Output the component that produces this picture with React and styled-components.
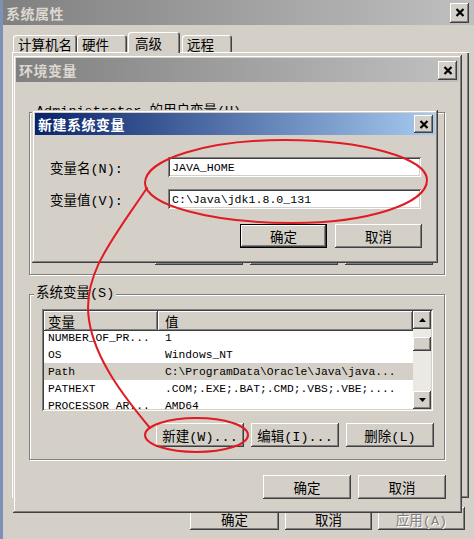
import React from 'react';
import styled, { createGlobalStyle, css } from 'styled-components';

const FACE = '#d4d0c8';

const GlobalStyle = createGlobalStyle`
  html, body { margin: 0; padding: 0; }
  body {
    background: #7d91b6;
    font-family: "Liberation Mono", "Noto Sans CJK SC", monospace;
  }
`;

// classic 3d edges
const raised = css`
  box-shadow: inset -1px -1px #404040, inset 1px 1px #ffffff, inset -2px -2px #808080, inset 2px 2px ${FACE};
`;
const sunken = css`
  box-shadow: inset 1px 1px #808080, inset -1px -1px #ffffff, inset 2px 2px #404040, inset -2px -2px ${FACE};
`;
const frame = css`
  box-shadow: inset -1px -1px #404040, inset 1px 1px ${FACE}, inset -2px -2px #808080, inset 2px 2px #ffffff;
`;

const Desktop = styled.div`
  position: relative;
  width: 474px;
  height: 539px;
  overflow: hidden;
  background: #7d91b6;
`;

const OuterWindow = styled.div`
  position: absolute;
  left: 3px;
  top: 0;
  width: 474px;
  height: 539px;
  background: ${FACE};
  display: flex;
  flex-direction: column;
`;

const Window = styled.div`
  position: absolute;
  left: ${p => p.$x}px;
  top: ${p => p.$y}px;
  width: ${p => p.$w}px;
  height: ${p => p.$h}px;
  box-sizing: border-box;
  padding: 3px;
  background: ${FACE};
  display: flex;
  flex-direction: column;
  ${frame}
`;

const TitleBar = styled.div`
  flex: none;
  height: ${p => p.$h}px;
  display: flex;
  align-items: center;
  padding: 0 ${p => p.$right ?? 2}px 0 3px;
  background: ${p => p.$active
    ? 'linear-gradient(to right, #0a246a, #a6caf0)'
    : 'linear-gradient(to right, #808080, #c0c0c0)'};
  color: ${p => p.$active ? '#ffffff' : '#dcd8d0'};
  font-family: "Noto Sans CJK SC", sans-serif;
  font-weight: bold;
  font-size: 14px;
  letter-spacing: 0.5px;
`;

const TitleText = styled.span`
  flex: 1;
`;

const CloseButton = styled.div`
  width: 19px;
  height: ${p => p.$h || 19}px;
  display: flex;
  align-items: center;
  justify-content: center;
  background: ${FACE};
  ${raised}
`;

const CloseX = () => (
  <svg width="10" height="9" viewBox="0 0 10 9">
    <path d="M1.5 1L8.5 8M8.5 1L1.5 8" stroke="#000" strokeWidth="2.2" />
  </svg>
);

const OuterBody = styled.div`
  flex: 1;
  display: flex;
  flex-direction: column;
  padding: 7px 8px 0 9px;
`;

const TabRow = styled.div`
  display: flex;
  align-items: flex-end;
  height: 21px;
  margin-bottom: -1px;
  padding-left: 1px;
`;

const Tab = styled.div`
  position: relative;
  z-index: ${p => p.$active ? 1 : 0};
  box-sizing: border-box;
  width: ${p => p.$w}px;
  height: ${p => p.$active ? 21 : 17}px;
  margin: ${p => p.$active ? '0 2px 0 1px' : '0 0 1px 0'};
  padding-left: ${p => p.$active ? 7 : 5}px;
  display: flex;
  align-items: center;
  background: ${FACE};
  border-radius: 3px 3px 0 0;
  box-shadow: inset 1px 1px #ffffff, inset -1px 0 #404040, inset -2px 0 #808080;
  font-size: 13.5px;
  color: #000;
`;

const TabPanel = styled.div`
  height: 446px;
  background: ${FACE};
  box-shadow: inset 1px 1px #ffffff, inset -1px -1px #404040, inset -2px -2px #808080;
`;

const ButtonRow = styled.div`
  display: flex;
  justify-content: flex-end;
  gap: ${p => p.$gap}px;
  margin-top: ${p => p.$mt || 0}px;
  margin-right: ${p => p.$mr || 0}px;
`;

const Button = styled.button`
  width: ${p => p.$w || 88}px;
  height: ${p => p.$h || 24}px;
  flex: none;
  padding: 0;
  border: none;
  background: ${FACE};
  font-family: "Liberation Mono", "Noto Sans CJK SC", monospace;
  font-size: 13.5px;
  color: ${p => p.$disabled ? '#808080' : '#000'};
  text-shadow: ${p => p.$disabled ? '1px 1px #ffffff' : 'none'};
  ${p => p.$default
    ? css`box-shadow: inset 0 0 0 1px #000, inset -2px -2px #404040, inset 2px 2px #ffffff, inset -3px -3px #808080;`
    : raised}
`;

const EnvBody = styled.div`
  flex: 1;
  display: flex;
  flex-direction: column;
  padding: 22px 14px 0 13px;
`;

const Group = styled.fieldset`
  margin: ${p => p.$mt || 0}px 0 0 0;
  padding: 0;
  min-width: 0;
  border: 1px solid #808080;
  box-shadow: inset 1px 1px #ffffff, 1px 1px #ffffff;
`;

const GroupLabel = styled.legend`
  margin-left: 4px;
  padding: 0 2px;
  height: 16px;
  line-height: 16px;
  background: ${FACE};
  font-size: 13.5px;
  color: #000;
`;

const GroupInner = styled.div`
  box-sizing: border-box;
  height: ${p => p.$h}px;
  display: flex;
  flex-direction: column;
  justify-content: flex-end;
  padding: ${p => p.$pad};
`;

const ListBox = styled.div`
  flex: none;
  height: 102px;
  box-sizing: border-box;
  padding: 2px;
  display: flex;
  background: #ffffff;
  ${sunken}
`;

const ListContent = styled.div`
  flex: 1;
  overflow: hidden;
`;

const Columns = css`
  display: grid;
  grid-template-columns: 114px 1fr;
`;

const HeaderRow = styled.div`
  ${Columns}
  height: 18px;
`;

const HeaderCell = styled.div`
  display: flex;
  align-items: center;
  padding-left: ${p => p.$pad}px;
  background: ${FACE};
  font-size: 13.5px;
  box-shadow: inset -1px -1px #404040, inset 1px 1px #ffffff, inset -2px -2px #808080;
`;

const Row = styled.div`
  ${Columns}
  height: 17px;
  align-items: center;
  background: ${p => p.$selected ? '#d4d0c8' : 'transparent'};
  font-family: "Liberation Mono", monospace;
  font-size: 11.3px;
  white-space: nowrap;
  color: #000;
`;

const Cell = styled.span`
  padding-left: ${p => p.$pad}px;
  overflow: hidden;
`;

const ScrollBar = styled.div`
  width: 18px;
  display: flex;
  flex-direction: column;
  background: #ebe9e3;
`;

const ScrollButton = styled.div`
  height: 18px;
  display: flex;
  align-items: center;
  justify-content: center;
  background: ${FACE};
  ${raised}
`;

const Thumb = styled.div`
  height: 14px;
  margin-top: 8px;
  background: ${FACE};
  ${raised}
`;

const Spacer = styled.div`
  flex: 1;
`;

const Arrow = ({ down }) => (
  <svg width="7" height="4" viewBox="0 0 7 4">
    <polygon points={down ? '0,0 7,0 3.5,4' : '0,4 7,4 3.5,0'} fill="#000" />
  </svg>
);

const DialogBody = styled.div`
  flex: 1;
  display: flex;
  flex-direction: column;
  padding: 22px 13px 0 15px;
`;

const FieldGrid = styled.div`
  display: grid;
  grid-template-columns: 118px 253px;
  grid-auto-rows: 20px;
  row-gap: 12px;
  align-items: center;
`;

const FieldLabel = styled.label`
  font-size: 13.5px;
  color: #000;
`;

const TextInput = styled.div`
  height: 20px;
  box-sizing: border-box;
  padding: 2px 4px;
  display: flex;
  align-items: center;
  background: #ffffff;
  font-family: "Liberation Mono", monospace;
  font-size: 11.6px;
  color: #000;
  ${sunken}
`;

const Annotations = styled.svg`
  position: absolute;
  left: 0;
  top: 0;
  pointer-events: none;
`;

const tabs = [
  { label: '计算机名', w: 64 },
  { label: '硬件', w: 50 },
  { label: '高级', w: 52, active: true },
  { label: '远程', w: 50 },
];

const vars = [
  ['NUMBER_OF_PR...', '1'],
  ['OS', 'Windows_NT'],
  ['Path', 'C:\\ProgramData\\Oracle\\Java\\java...'],
  ['PATHEXT', '.COM;.EXE;.BAT;.CMD;.VBS;.VBE;....'],
  ['PROCESSOR_AR...', 'AMD64'],
];

export default function App() {
  return (
    <>
      <GlobalStyle />
      <Desktop>
        <OuterWindow>
          <TitleBar $h={25} $right={8}>
            <TitleText>系统属性</TitleText>
            <CloseButton $h={20}><CloseX /></CloseButton>
          </TitleBar>
          <OuterBody>
            <TabRow>
              {tabs.map(t => (
                <Tab key={t.label} $w={t.w} $active={t.active}>{t.label}</Tab>
              ))}
            </TabRow>
            <TabPanel />
            <ButtonRow $gap={6} $mt={9} $mr={4}>
              <Button $w={89} $h={23}>确定</Button>
              <Button $w={87} $h={23}>取消</Button>
              <Button $w={87} $h={23} $disabled>应用(A)</Button>
            </ButtonRow>
          </OuterBody>
        </OuterWindow>

        <Window $x={13} $y={55} $w={449} $h={458}>
          <TitleBar $h={24}>
            <TitleText>环境变量</TitleText>
            <CloseButton><CloseX /></CloseButton>
          </TitleBar>
          <EnvBody>
            <Group>
              <GroupLabel>Administrator 的用户变量(U)</GroupLabel>
              <GroupInner $h={154} $pad="0 11px 9px 12px">
                <ButtonRow $gap={7}>
                  <Button>新建(N)...</Button>
                  <Button>编辑(E)...</Button>
                  <Button>删除(D)</Button>
                </ButtonRow>
              </GroupInner>
            </Group>
            <Group $mt={11}>
              <GroupLabel>系统变量(S)</GroupLabel>
              <GroupInner $h={157} $pad="7px 11px 12px 12px">
                <ListBox>
                  <ListContent>
                    <HeaderRow>
                      <HeaderCell $pad={4}>变量</HeaderCell>
                      <HeaderCell $pad={7}>值</HeaderCell>
                    </HeaderRow>
                    {vars.map(([name, value]) => (
                      <Row key={name} $selected={name === 'Path'}>
                        <Cell $pad={4}>{name}</Cell>
                        <Cell $pad={7}>{value}</Cell>
                      </Row>
                    ))}
                  </ListContent>
                  <ScrollBar>
                    <ScrollButton><Arrow /></ScrollButton>
                    <Thumb />
                    <Spacer />
                    <ScrollButton><Arrow down /></ScrollButton>
                  </ScrollBar>
                </ListBox>
                <Spacer />
                <ButtonRow $gap={7} $mr={-1}>
                  <Button>新建(W)...</Button>
                  <Button>编辑(I)...</Button>
                  <Button>删除(L)</Button>
                </ButtonRow>
              </GroupInner>
            </Group>
            <ButtonRow $gap={7} $mt={15} $mr={-1}>
              <Button>确定</Button>
              <Button>取消</Button>
            </ButtonRow>
          </EnvBody>
        </Window>

        <Window $x={32} $y={110} $w={406} $h={153}>
          <TitleBar $h={22} $active>
            <TitleText>新建系统变量</TitleText>
            <CloseButton $h={18}><CloseX /></CloseButton>
          </TitleBar>
          <DialogBody>
            <FieldGrid>
              <FieldLabel>变量名(N):</FieldLabel>
              <TextInput>JAVA_HOME</TextInput>
              <FieldLabel>变量值(V):</FieldLabel>
              <TextInput>C:\Java\jdk1.8.0_131</TextInput>
            </FieldGrid>
            <ButtonRow $gap={8} $mt={15}>
              <Button $w={87} $default>确定</Button>
              <Button $w={87}>取消</Button>
            </ButtonRow>
          </DialogBody>
        </Window>

        <Annotations width="474" height="539" viewBox="0 0 474 539">
          <g fill="none" stroke="#e01b24" strokeWidth="2" strokeLinecap="round">
            <path d="M145 183 C145 159 208 140 285 140 C363 140 427 158 427 180 C427 204 367 223 293 223 C211 223 145 205 145 183 Z" />
            <ellipse cx="196.5" cy="435" rx="51.5" ry="17" />
            <path d="M147 188 C112 240 82 275 89 320 C95 360 125 398 150 428" />
          </g>
        </Annotations>
      </Desktop>
    </>
  );
}
